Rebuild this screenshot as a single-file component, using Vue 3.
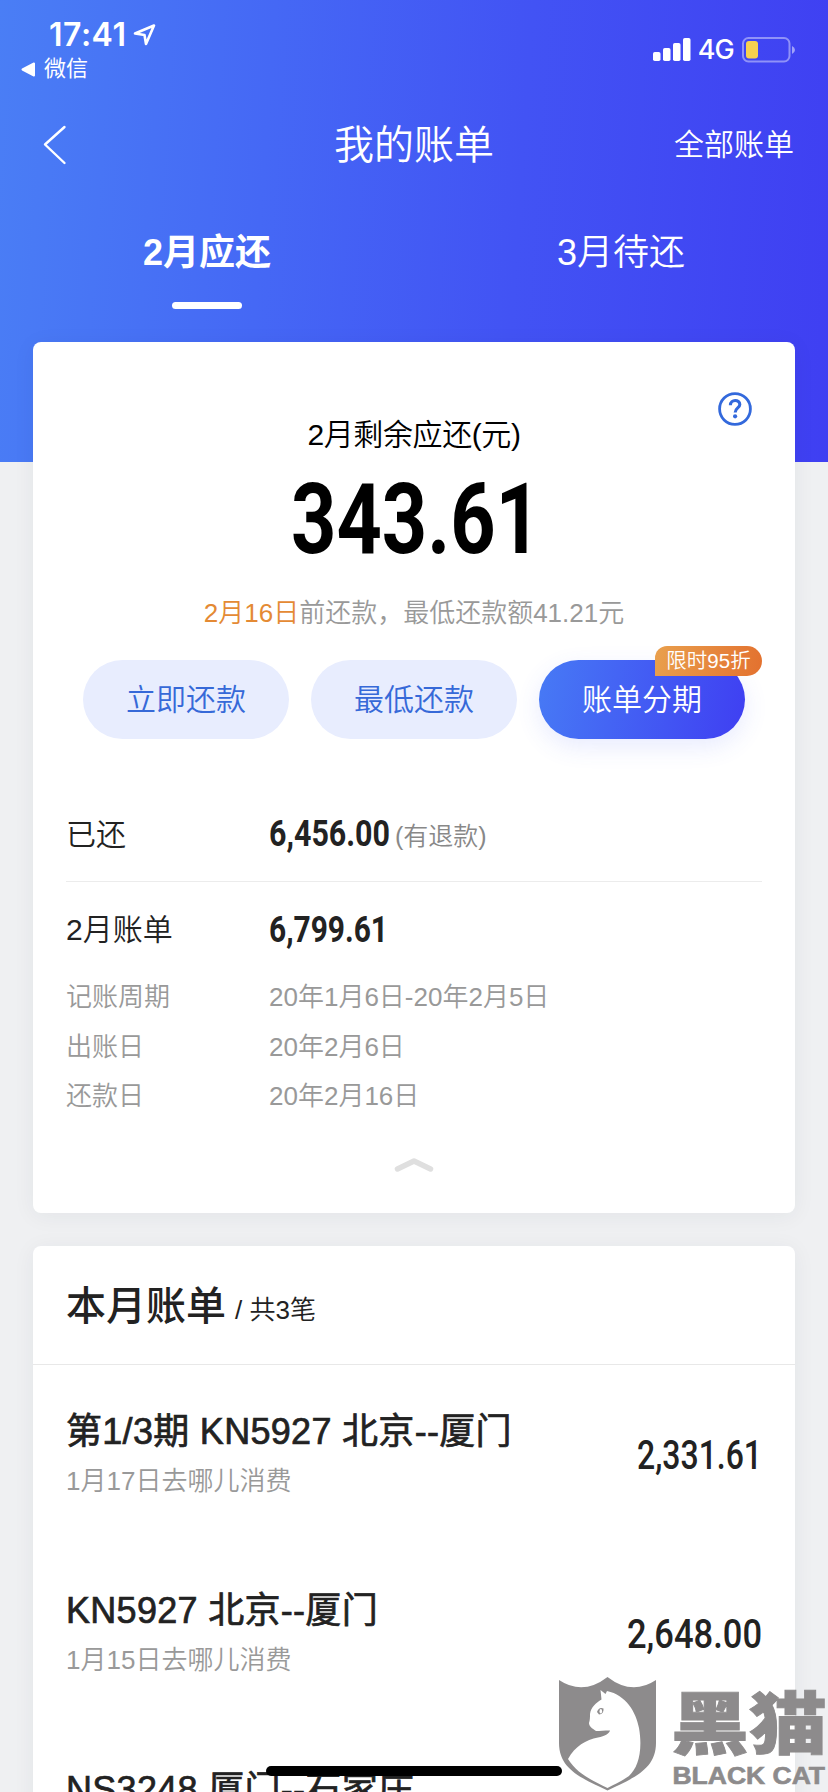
<script setup>
import { h } from 'vue'

// Condensed numerals, fitted to a fixed width
const Amount = (props) =>
  h('svg', { width: props.w, height: props.h, viewBox: `0 0 ${props.w} ${props.h}`, style: { display: 'block', overflow: 'visible' } }, [
    h('text', {
      x: 0,
      y: props.base,
      'font-size': props.size,
      'font-weight': props.weight,
      'font-family': 'Roboto, "Liberation Sans", sans-serif',
      fill: 'currentColor',
      textLength: props.w,
      lengthAdjust: 'spacingAndGlyphs'
    }, props.value)
  ])
Amount.props = ['value', 'w', 'h', 'base', 'size', 'weight']

const details = [
  { label: '记账周期', value: '20年1月6日-20年2月5日' },
  { label: '出账日', value: '20年2月6日' },
  { label: '还款日', value: '20年2月16日' }
]

const bills = [
  { title: '第1/3期 KN5927 北京--厦门', sub: '1月17日去哪儿消费', amount: '2,331.61', w: 125 },
  { title: 'KN5927 北京--厦门', sub: '1月15日去哪儿消费', amount: '2,648.00', w: 135 },
  { title: 'NS3248 厦门--石家庄', sub: '', amount: '', w: 0 }
]
</script>

<template>
  <div class="page">
    <header class="header">
      <div class="status">
        <div class="status-left">
          <div class="clock">
            <span>17:41</span>
            <svg width="24" height="24" viewBox="0 0 24 24">
              <path d="M2 10.5 L21 2.500 L13 21 L11.500 12 Z" fill="none" stroke="#fff" stroke-width="2.600" stroke-linejoin="round" />
            </svg>
          </div>
          <div class="source">
            <svg width="15" height="15" viewBox="0 0 15 15">
              <path d="M1.5 7.5 L13 1.5 V13.5 Z" fill="#fff" stroke="#fff" stroke-width="2" stroke-linejoin="round" />
            </svg>
            <span>微信</span>
          </div>
        </div>
        <div class="status-right">
          <svg width="38" height="24" viewBox="0 0 38 24" fill="#fff">
            <rect x="0" y="14" width="7.5" height="9" rx="1.8" />
            <rect x="10" y="10" width="7.5" height="13" rx="1.8" />
            <rect x="20" y="5" width="7.5" height="18" rx="1.8" />
            <rect x="30" y="0" width="7.5" height="23" rx="1.8" />
          </svg>
          <span class="net">4G</span>
          <svg width="54" height="26" viewBox="0 0 54 26">
            <rect x="1" y="1" width="46.5" height="23.5" rx="5.5" fill="none" stroke="#fff" stroke-opacity=".42" stroke-width="2" />
            <rect x="4" y="4" width="12" height="17.5" rx="3" fill="#f7d04f" />
            <path d="M50 9 Q53 10.5 53 13 Q53 15.5 50 17 Z" fill="#fff" fill-opacity=".5" />
          </svg>
        </div>
      </div>

      <nav class="nav">
        <svg class="back" width="26" height="42" viewBox="0 0 26 42">
          <path d="M22.5 3 L3 20.5 L22.5 39" fill="none" stroke="#fff" stroke-width="2.4" stroke-linecap="round" stroke-linejoin="round" />
        </svg>
        <h1>我的账单</h1>
        <span class="all">全部账单</span>
      </nav>

      <div class="tabs">
        <div class="tab active">2月应还</div>
        <div class="tab">3月待还</div>
      </div>
    </header>

    <main>
      <section class="card summary">
        <svg class="help" width="34" height="34" viewBox="0 0 34 34">
          <circle cx="17" cy="17" r="15.4" fill="none" stroke="#3369dc" stroke-width="2.8" />
          <path d="M12.4 13.2 C12.6 7 21.8 7.200 21.8 12.6 C21.8 16 17.2 16 17.2 20.4" fill="none" stroke="#3369dc" stroke-width="3.100" />
          <circle cx="17.1" cy="24.3" r="2.100" fill="#3369dc" />
        </svg>
        <div class="label">2月剩余应还(元)</div>
        <div class="total"><Amount value="343.61" :w="250" :h="90" :base="78" :size="98" :weight="700" /></div>
        <div class="hint"><em>2月16日</em>前还款，最低还款额41.21元</div>
        <div class="actions">
          <button>立即还款</button>
          <button>最低还款</button>
          <button class="primary">账单分期<span class="badge">限时95折</span></button>
        </div>
        <div class="row paid">
          <span class="key">已还</span>
          <Amount value="6,456.00" :w="121" :h="40" :base="31" :size="37" :weight="700" />
          <span class="note">(有退款)</span>
        </div>
        <div class="row bill">
          <span class="key">2月账单</span>
          <Amount value="6,799.61" :w="119" :h="40" :base="32" :size="37" :weight="700" />
        </div>
        <div class="details">
          <div v-for="d in details" :key="d.label" class="detail">
            <span class="key">{{ d.label }}</span><span>{{ d.value }}</span>
          </div>
        </div>
        <svg class="fold" width="42" height="18" viewBox="0 0 42 18">
          <path d="M4.5 13 L21 5 L37.5 13" fill="none" stroke="#dfdfdf" stroke-width="5.500" stroke-linecap="round" stroke-linejoin="round" />
        </svg>
      </section>

      <section class="card list">
        <div class="head"><h2>本月账单</h2><span>/ 共3笔</span></div>
        <div v-for="b in bills" :key="b.title" class="item">
          <div>
            <div class="title">{{ b.title }}</div>
            <div class="sub">{{ b.sub }}</div>
          </div>
          <Amount v-if="b.amount" class="price" :value="b.amount" :w="b.w" :h="40" :base="34.5" :size="40" :weight="500" />
        </div>
      </section>
    </main>

    <div class="home-bar"></div>

    <svg class="watermark" width="270" height="116" viewBox="0 0 270 116">
      <path d="M1 3 Q25 19 49.500 0 Q74 19 98 3 V66 C98 92 76 101 49.500 113.500 C23 101 1 92 1 66 Z" fill="#8d8b8c" />
      <path d="M42.500 13 L47.500 17 L49 14 C68 18 78 35 81 51 C85 74 80 91 71 99 C64 104 57 107 49.500 111 C36 104 20 98 10 82 C17 69 28 63 40 60.500 C47 59 51 57 52 53.500 C46 53.500 42 54 38 54 C34 51.500 31 49 31 46 C32 43 32 40 32 37 C33 30 38 26 43.500 22.500 Z" fill="#fff" />
      <path d="M39 35 Q41 29.500 45.500 31.500 Q46 37 41 37.500 Z" fill="#8d8b8c" />
      <ellipse cx="42.800" cy="34.200" rx="1.300" ry="2.300" fill="#fff" />
      <text class="wm-cn" transform="translate(113 71.500) scale(1 .88)" textLength="156" lengthAdjust="spacingAndGlyphs">黑猫</text>
      <text class="wm-en" x="114.500" y="107" textLength="152.500" lengthAdjust="spacingAndGlyphs">BLACK CAT</text>
    </svg>
  </div>
</template>

<style>
body {
  margin: 0;
}
</style>

<style scoped>
.page {
  position: relative;
  width: 828px;
  height: 1792px;
  overflow: hidden;
  background: #eff0f2;
  color: #222;
  font-family: "Liberation Sans", "Noto Sans CJK SC", sans-serif;
  font-weight: 350;
}
h1, h2 {
  margin: 0;
}
.header {
  height: 462px;
  color: #fff;
  background: linear-gradient(94deg, #4a7ef5 0%, #4568f5 32%, #4253f4 62%, #3f3ff2 100%);
}
.status {
  display: flex;
  justify-content: space-between;
  height: 100px;
}
.status-left {
  padding: 15px 0 0 21px;
}
.clock {
  display: flex;
  align-items: center;
  gap: 7px;
  padding-left: 28px;
  height: 40px;
  font: 600 32px/40px Inter, sans-serif;
  letter-spacing: 0.5px;
}
.source {
  display: flex;
  align-items: center;
  gap: 8px;
  height: 28px;
  font-size: 22px;
  font-weight: 400;
  line-height: 28px;
}
.status-right {
  display: flex;
  align-items: center;
  height: 26px;
  padding: 37px 32px 0 0;
}
.net {
  margin: 0 8px 0 7px;
  font: 500 27px/26px Inter, sans-serif;
  letter-spacing: -0.8px;
}
.nav {
  display: grid;
  grid-template-columns: 1fr auto 1fr;
  align-items: center;
  height: 90px;
  padding: 0 34px 0 42px;
}
.nav h1 {
  font-size: 40px;
  font-weight: 350;
  line-height: 60px;
  transform: translateX(-4px);
}
.all {
  justify-self: end;
  font-size: 30px;
  line-height: 40px;
}
.tabs {
  display: grid;
  grid-template-columns: 1fr 1fr;
  width: 828px;
  padding-top: 37px;
}
.tab {
  display: flex;
  flex-direction: column;
  align-items: center;
  font-size: 36px;
  line-height: 52px;
}
.tab.active {
  font-weight: 700;
}
.tab.active::after {
  content: "";
  width: 70px;
  height: 7px;
  margin-top: 23px;
  border-radius: 4px;
  background: #fff;
}
main {
  display: flex;
  flex-direction: column;
  gap: 33px;
  width: 762px;
  margin: -120px 33px 0;
}
.card {
  position: relative;
  box-sizing: border-box;
  border-radius: 8px;
  background: #fff;
  box-shadow: 0 3px 22px rgba(40, 50, 60, 0.06);
}
.summary {
  height: 871px;
  padding: 73px 33px 0;
}
.help {
  position: absolute;
  top: 50px;
  right: 43px;
}
.label {
  color: #000;
  font-size: 30px;
  line-height: 40px;
  letter-spacing: -0.4px;
  text-align: center;
}
.total {
  display: flex;
  justify-content: center;
  margin-top: 20px;
  padding-left: 3px;
  color: #000;
}
.hint {
  margin-top: 30px;
  color: #999;
  font-size: 26px;
  line-height: 36px;
  text-align: center;
}
.hint em {
  color: #e48a34;
  font-style: normal;
}
.actions {
  display: flex;
  justify-content: center;
  gap: 22px;
  margin-top: 29px;
}
.actions button {
  position: relative;
  width: 206px;
  height: 79px;
  padding: 0;
  border: 0;
  border-radius: 40px;
  background: #e8edfe;
  color: #3669d8;
  font: inherit;
  font-size: 30px;
  line-height: 79px;
}
.actions .primary {
  background: linear-gradient(100deg, #477af5, #3f3ff2);
  color: #fff;
  box-shadow: 0 8px 24px rgba(66, 90, 245, 0.12);
}
.badge {
  position: absolute;
  top: -14px;
  right: -17px;
  width: 107px;
  height: 30px;
  border-radius: 12px 15px 15px 0;
  background: linear-gradient(100deg, #e9a04d, #e3712f);
  font-size: 20.5px;
  line-height: 30px;
  text-align: center;
}
.row {
  display: flex;
  height: 40px;
  font-size: 30px;
  line-height: 40px;
}
.row .key {
  width: 203px;
}
.paid {
  margin-top: 76px;
  padding-bottom: 26px;
  border-bottom: 1px solid #ececec;
}
.note {
  margin-left: 5px;
  color: #888;
  font-size: 25px;
  line-height: 42px;
}
.bill {
  padding-top: 28px;
}
.details {
  margin-top: 23px;
  color: #999;
  font-size: 26px;
  line-height: 49.5px;
}
.detail {
  display: flex;
}
.detail .key {
  width: 203px;
}
.fold {
  display: block;
  margin: 34px auto 0;
}
.list {
  height: 600px;
}
.head {
  display: flex;
  height: 86px;
  padding: 32px 33px 0;
  border-bottom: 1px solid #e8e8e8;
  line-height: 56px;
}
.head h2 {
  font-size: 40px;
  font-weight: 500;
}
.head span {
  margin-left: 9px;
  padding-top: 4px;
  font-size: 26px;
}
.item {
  display: flex;
  justify-content: space-between;
  box-sizing: border-box;
  height: 179px;
  padding: 43px 33px 0 33px;
}
.title {
  font-size: 36px;
  font-weight: 400;
  line-height: 48px;
  letter-spacing: 0.3px;
  -webkit-text-stroke: 0.7px currentColor;
}
.sub {
  margin-top: 7px;
  color: #999;
  font-size: 26px;
  line-height: 36px;
}
.price {
  margin-top: 26px;
}
.home-bar {
  position: absolute;
  left: 266px;
  top: 1766px;
  width: 296px;
  height: 10px;
  border-radius: 5px;
  background: #000;
}
.watermark {
  position: absolute;
  left: 558px;
  top: 1677px;
}
.wm-cn {
  fill: #8d8b8c;
  stroke: #8d8b8c;
  stroke-width: 1px;
  font: 900 77px "Noto Sans CJK SC", sans-serif;
}
.wm-en {
  fill: #8d8b8c;
  stroke: #8d8b8c;
  stroke-width: 0.6px;
  font: 700 23px "Liberation Sans", sans-serif;
}
</style>
